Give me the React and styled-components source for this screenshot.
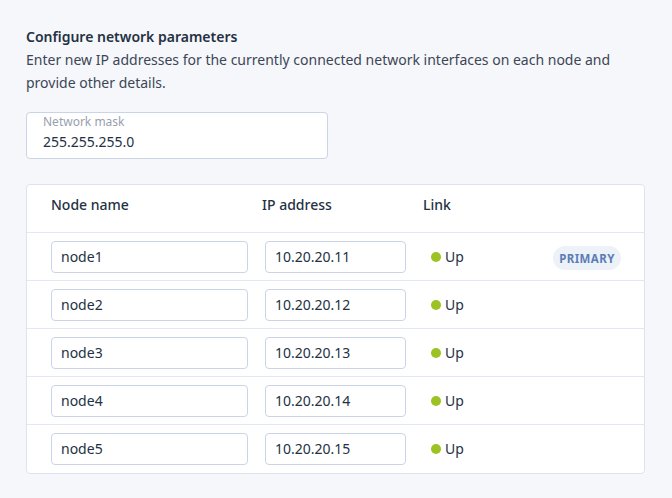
import React from 'react';
import styled, { createGlobalStyle } from 'styled-components';

const GlobalStyle = createGlobalStyle`
  html, body {
    margin: 0;
    padding: 0;
    background-color: #f6f7fb;
  }
  body {
    font-family: "Noto Sans", "Open Sans", sans-serif;
    color: #243143;
  }
`

const Page = styled.div`
  padding: 26px 27px 25px 26px;
`

const Title = styled.h2`
  margin: 0;
  font-size: 14px;
  font-weight: 600;
  line-height: 22px;
  color: #243143;
`

const Description = styled.p`
  margin: 0;
  font-size: 14px;
  line-height: 23px;
  color: #3c4656;
`

const MaskField = styled.label`
  display: flex;
  flex-direction: column;
  box-sizing: border-box;
  width: 302px;
  height: 47px;
  margin-top: 18px;
  padding: 1px 16px 0;
  background-color: #fff;
  border: 1px solid #c9d4e6;
  border-radius: 4px;
`

const MaskLabel = styled.span`
  font-size: 12px;
  line-height: 16px;
  color: #9aa0ae;
`

const MaskValue = styled.span`
  margin-top: 2px;
  font-size: 14px;
  line-height: 20px;
  color: #243143;
`

const Card = styled.div`
  margin-top: 25px;
  padding-bottom: 1px;
  background-color: #fff;
  border: 1px solid #dde4ef;
  border-radius: 4px;
`

const Row = styled.div`
  display: grid;
  grid-template-columns: 214px 158px 1fr auto;
  align-items: ${p => (p.$header ? 'start' : 'center')};
  box-sizing: border-box;
  height: ${p => (p.$header ? 47 : 48)}px;
  padding: ${p => (p.$header ? '10px 23px 0 24px' : '0 23px 0 24px')};
  border-top: ${p => (p.$header ? 'none' : '1px solid #e2e8f2')};
`

const HeadCell = styled.div`
  font-size: 14px;
  line-height: 20px;
  font-weight: 500;
  color: #243143;
  margin-left: ${p => p.$shift || 0}px;
`

const TextInput = styled.input`
  box-sizing: border-box;
  width: ${p => p.$width}px;
  height: 32px;
  padding: 0 9px;
  font-family: inherit;
  font-size: 14px;
  color: #243143;
  background-color: #fff;
  border: 1px solid #c9d4e6;
  border-radius: 4px;
  outline: none;
`

const Status = styled.div`
  display: flex;
  align-items: center;
  gap: 4px;
  padding-left: 8px;
  font-size: 14px;
  color: #243143;
`

const Dot = styled.span`
  width: 10px;
  height: 10px;
  border-radius: 50%;
  background-color: #9cc322;
`

const Badge = styled.span`
  display: inline-flex;
  align-items: center;
  justify-content: center;
  box-sizing: border-box;
  width: 68px;
  height: 24px;
  margin-top: 2px;
  padding-top: 1px;
  border-radius: 12px;
  background-color: #edf1f8;
  color: #5b7db6;
  font-size: 11.5px;
  font-weight: 700;
  letter-spacing: 0.4px;
`

const nodes = [
  { name: 'node1', ip: '10.20.20.11', primary: true },
  { name: 'node2', ip: '10.20.20.12' },
  { name: 'node3', ip: '10.20.20.13' },
  { name: 'node4', ip: '10.20.20.14' },
  { name: 'node5', ip: '10.20.20.15' },
]

const App = () => {
  return (
    <Page>
      <GlobalStyle />
      <Title>Configure network parameters</Title>
      <Description>
        Enter new IP addresses for the currently connected network interfaces on each node and
        provide other details.
      </Description>
      <MaskField>
        <MaskLabel>Network mask</MaskLabel>
        <MaskValue>255.255.255.0</MaskValue>
      </MaskField>
      <Card>
        <Row $header>
          <HeadCell>Node name</HeadCell>
          <HeadCell $shift={-3}>IP address</HeadCell>
          <HeadCell>Link</HeadCell>
          <span />
        </Row>
        {nodes.map(n => (
          <Row key={n.name}>
            <TextInput $width={197} defaultValue={n.name} />
            <TextInput $width={141} defaultValue={n.ip} />
            <Status>
              <Dot />
              Up
            </Status>
            {n.primary ? <Badge>PRIMARY</Badge> : <span />}
          </Row>
        ))}
      </Card>
    </Page>
  )
}

export default App
